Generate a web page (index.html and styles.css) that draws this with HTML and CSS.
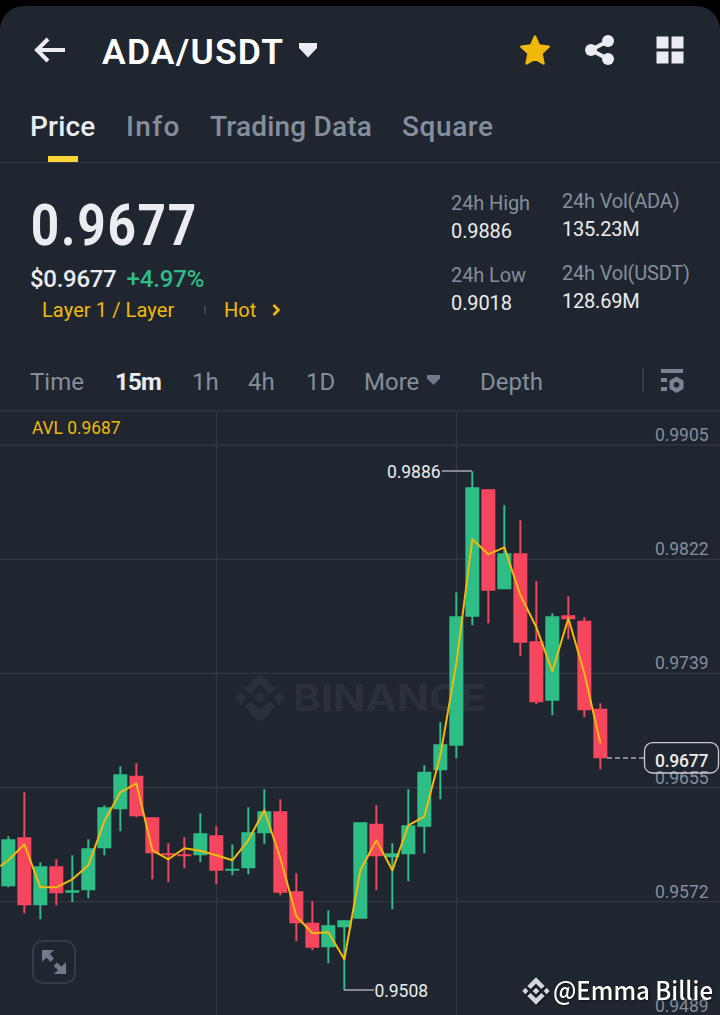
FILE: index.html
```html
<!DOCTYPE html>
<html lang="en">
<head>
<meta charset="utf-8">
<title>ADA/USDT</title>
<link rel="stylesheet" href="styles.css">
</head>
<body>
<main class="app">
  <header class="topbar">
    <svg class="back" width="32" height="26" viewBox="0 0 32 26"><path d="M14 2 3 13 14 24M3 13H31" fill="none" stroke="#eaecef" stroke-width="4"/></svg>
    <h1 class="pair">ADA/USDT</h1>
    <svg class="caret" width="18" height="15" viewBox="0 0 18 15"><path d="M0 0H18V5L9 14.5 0 5Z" fill="#eaecef"/></svg>
    <svg class="star" width="30" height="30" viewBox="0 0 30 30"><path d="M15 1.5 19 10.5 28.700 11.700 21.500 18.500 23.500 28.500 15 23.800 6.500 28.500 8.500 18.500 1.300 11.700 11 10.500Z" fill="#f0b90b" stroke="#f0b90b" stroke-width="2.400" stroke-linejoin="round"/></svg>
    <svg class="share" width="30" height="30" viewBox="0 0 30 30"><path d="M23 6 6 15 23 24" fill="none" stroke="#eaecef" stroke-width="4"/><g fill="#eaecef"><circle cx="23" cy="6" r="6"/><circle cx="6" cy="15" r="6"/><circle cx="23" cy="24" r="6"/></g></svg>
    <svg class="apps" width="28" height="28" viewBox="0 0 28 28"><path d="M.5.5h12v12H.5zM15.500.5h12v12h-12zM.5 15.500h12v12H.5zM15.500 15.500h12v12h-12z" fill="#eaecef"/></svg>
  </header>

  <nav class="tabs">
    <span class="tab active">Price</span>
    <span class="tab info">Info</span>
    <span class="tab trading">Trading Data</span>
    <span class="tab square">Square</span>
  </nav>

  <section class="overview">
    <div class="quote">
      <div class="last">0.9677</div>
      <div class="fiat"><span>$0.9677</span><span class="up">+4.97%</span></div>
      <div class="tags"><span class="layer">Layer 1 / Layer</span><i class="tick"></i><span class="hot">Hot</span>
        <svg width="8" height="12" viewBox="0 0 8 12"><path d="M1.500 1 6.500 6 1.500 11" fill="none" stroke="#f0b90b" stroke-width="2.500"/></svg>
      </div>
    </div>
    <dl class="stats">
      <div><dt>24h High</dt><dd>0.9886</dd></div>
      <div><dt>24h Low</dt><dd>0.9018</dd></div>
    </dl>
    <dl class="stats volume">
      <div><dt>24h Vol(ADA)</dt><dd>135.23M</dd></div>
      <div><dt>24h Vol(USDT)</dt><dd>128.69M</dd></div>
    </dl>
  </section>

  <nav class="intervals">
    <span>Time</span><span class="selected">15m</span><span>1h</span><span>4h</span><span>1D</span><span>More</span>
    <svg class="more-caret" width="13" height="10" viewBox="0 0 13 10"><path d="M0 0H13V3.500L6.500 10 0 3.500Z" fill="#707a8a"/></svg>
    <span>Depth</span>
    <i class="separator"></i>
    <svg class="settings" width="24" height="26" viewBox="0 0 24 26"><path d="M1 1H23V5H1zM1 10H7V14H1zM1 19H7V23H1z" fill="#7b8494"/><path fill-rule="evenodd" d="M16.500 8.500 23.500 12.500V20.700L16.500 25 9.500 20.700V12.500ZM16.500 14A2.800 2.800 0 1 0 16.500 19.600 2.800 2.800 0 1 0 16.500 14Z" fill="#7b8494"/></svg>
  </nav>

  <section class="chart">
    <svg class="plot" width="720" height="605" viewBox="0 410 720 605">
      <defs>
        <g id="mark">
          <path d="M0-24.500 15.500-9 9.500-3.500 0-13-9.500-3.500-15.500-9ZM0 24.500 15.500 9 9.500 3.500 0 13-9.500 3.500-15.500 9ZM-19-6-13.500 0-19 6-24.500 0ZM19-6 24.500 0 19 6 13.500 0ZM0-6 6 0 0 6-6 0Z"/>
        </g>
      </defs>
      <path class="grid strong" d="M0 411H720M0 445H720"/>
      <path class="grid" d="M0 559.300H720M0 673.400H720M0 787.500H720M0 901.600H720M216.400 412V1015M456.400 412V1015"/>
      <g class="watermark">
        <use href="#mark" x="260" y="697.500"/>
        <text x="293" y="711" textLength="193" lengthAdjust="spacingAndGlyphs">BINANCE</text>
      </g>
      <g class="axis">
        <text x="655" y="441" textLength="53.500">0.9905</text>
        <text x="655" y="555" textLength="53.500">0.9822</text>
        <text x="655" y="669" textLength="53.500">0.9739</text>
        <text x="655" y="784" textLength="53.500">0.9655</text>
        <text x="655" y="898" textLength="53.500">0.9572</text>
        <text x="655" y="1012" textLength="53.500">0.9489</text>
      </g>
      <text class="avl" x="32" y="434" textLength="88.500" lengthAdjust="spacingAndGlyphs">AVL 0.9687</text>
      <g transform="translate(.35 .3)">
        <path class="wick rise" d="M8 836V887M40 862V919M72 855V902M88 839V898M104 805V855M120 766V831M200 813V862M232 844V875M248 807V874M264 789V844M328 910V963M344 920V990M392 843V909M408 789V881M424 765V853M440 722V799M456 592V758M472 471V625M504 505V589M552 613V715"/>
        <path class="wick fall" d="M24 792V913M56 859V905M136 763V817M152 817V879M168 843V882M184 837V868M216 826V884M280 799V895M296 873V941M312 901V950M376 805V890M488 489V623M520 520V656M536 581V704M568 596V639M584 617V717M600 703V769"/>
        <path class="body rise" d="M8 839V886M40 866V905M72 890V892.500M88 848V890M104 807V848M120 774V809M200 833V855M232 868.500V870.500M248 832V868M264 811V833M328 925V947M344 920V927M360 822V918.500M392 853V857M408 825V854M424 771.500V826.500M440 744V770M456 616V745.500M472 487V616.500M504 553V589M552 616V700.500"/>
        <path class="body fall" d="M24 837V905M56 866V893M136 775.500V816M152 817V853M168 853V855M184 854V856M216 835V870.500M280 811V892.500M296 891V923M312 922.500V947.500M376 823.500V856M488 489V590.500M520 553V642.500M536 641V702M568 615V619M584 620.500V710M600 708.500V758"/>
        <polyline class="average" points="0,866 8,860 24,844 40,887 56,887 72,879 88,865 104,821 120,792 136,783 152,850 168,859 184,848 200,850.500 216,855 232,860 248,840 264,810 280,858 296,916 312,933 328,932 344,959 360,870 376,840 392,870 408,825 424,816 440,755 456,663 472,539 488,554 504,547 520,595 536,627 552,671 568,618 584,673 600,743"/>
      </g>
      <path class="leader" d="M442 471H472M344 990H374"/>
      <text class="extreme" x="387" y="477.500" textLength="53.500">0.9886</text>
      <text class="extreme" x="374.500" y="996.500" textLength="53.500">0.9508</text>
      <path class="leader dashed" d="M607 758H644"/>
      <rect class="price-box" x="644.500" y="742.700" width="74" height="30.300" rx="8"/>
      <text class="extreme current" x="655" y="767" textLength="53.500">0.9677</text>
      <rect class="expand" x="33" y="941" width="42" height="42" rx="9.500"/>
      <path d="M42 950H54L50 954 54 958.500 50.500 962 46.500 957.500 42 962ZM66 974H54L58 970 53.500 966 57 962.500 61.500 966.500 66 962Z" fill="#707a8a"/>
      <g class="credit">
        <use href="#mark" transform="translate(536 991) scale(.56)"/>
        <text x="553" y="1000" textLength="160" lengthAdjust="spacingAndGlyphs">@Emma Billie</text>
      </g>
    </svg>
  </section>
</main>
</body>
</html>
```
FILE: styles.css
```css
* { box-sizing: border-box; }
body { margin: 0; background: #000; font-family: Roboto, "Liberation Sans", sans-serif; color: #eaecef; }
.app { margin-top: 6px; width: 720px; height: 1009px; background: #202630; border-radius: 24px 24px 0 0; overflow: hidden; }
svg { display: block; flex: none; }

.topbar { display: flex; align-items: center; height: 88px; padding: 0 36px 0 34px; }
.pair { margin: 3px 0 0 36px; width: 182px; font-size: 35.5px; font-weight: 600; line-height: 40px; letter-spacing: 1.2px; color: #fff; white-space: nowrap; }
.caret { margin-left: 15px; }
.star { margin-left: auto; }
.share { margin-left: 35px; }
.apps { margin-left: 41px; }

.tabs { display: grid; grid-template-columns: 96px 84px 192px auto; height: 69px; padding: 13px 30px 0; border-bottom: 1px solid #333b47; font-size: 28px; font-weight: 500; line-height: 40px; color: #848e9c; }
.tab { white-space: nowrap; letter-spacing: .4px; }
.info { letter-spacing: 1.4px; }
.trading { letter-spacing: .2px; }
.square { letter-spacing: .6px; }
.active { display: flex; flex-direction: column; justify-content: space-between; width: 65px; letter-spacing: .2px; color: #eaecef; }
.active::after { content: ""; width: 30px; height: 6px; margin-left: 18px; background: #fcd535; }

.overview { display: grid; grid-template-columns: 421px 111px auto; height: 187px; padding: 26px 0 0 30px; }
.last { height: 70px; padding-left: 1px; font-size: 57px; font-weight: 700; line-height: 73px; letter-spacing: 2px; transform: scaleX(.87); transform-origin: left; }
.fiat { display: flex; gap: 10px; margin-top: 4px; font-size: 24px; font-weight: 500; line-height: 32px; letter-spacing: -.3px; }
.up { letter-spacing: -.1px; color: #2ebd85; }
.tags { display: flex; align-items: center; padding-left: 12px; font-size: 20px; line-height: 30px; color: #f0b90b; }
.layer { width: 162px; letter-spacing: .1px; }
.tick { width: 2px; height: 8px; background: #3a424f; }
.hot { width: 48px; margin-left: 18px; }
.stats { display: flex; flex-direction: column; gap: 16px; margin: 0; font-size: 20px; line-height: 28px; letter-spacing: -.1px; }
.volume { margin-top: -2px; letter-spacing: -.2px; }
dt { color: #848e9c; white-space: nowrap; }
dd { margin: 0; }

.intervals { display: grid; grid-template-columns: 85px 77px 56px 58px 58px 63px 53px 162px 2px auto; align-items: center; height: 60px; padding: 3px 0 0 30px; font-size: 24px; color: #848e9c; white-space: nowrap; }
.selected { font-weight: 700; letter-spacing: -.8px; color: #eaecef; }
.more-caret { margin-top: -4px; }
.separator { width: 2px; height: 24px; margin-top: -3px; background: #333b47; }
.settings { margin: -2px 0 0 16px; }

.chart { height: 605px; }
.grid { fill: none; stroke: #313842; stroke-width: 1.3; }
.strong { stroke: #2b323c; stroke-width: 2; }
.watermark { fill: #2b313b; font: 700 37px Inter, sans-serif; }
.axis { fill: #848e9c; font-size: 17.5px; }
.avl { fill: #f0b90b; font-size: 17.5px; }
.wick { stroke-width: 2; }
.body { stroke-width: 14; }
.rise { stroke: #2ebd85; }
.fall { stroke: #f6465d; }
.average { fill: none; stroke: #f0b90b; stroke-width: 2; stroke-linejoin: round; }
.extreme { fill: #eaecef; font-size: 17.5px; }
.current { font-weight: 500; }
.leader { stroke: #a4a9b2; stroke-width: 1.5; }
.dashed { stroke-dasharray: 5 3; }
.price-box { fill: none; stroke: #c7cbd1; stroke-width: 1.3; }
.expand { fill: #202630; stroke: #333b47; stroke-width: 2; }
.credit { fill: #d5d6d8; filter: drop-shadow(1px 1px 1px #0008); }
.credit text { fill: #fff; font: 500 25px "Noto Sans CJK SC", sans-serif; }
```
